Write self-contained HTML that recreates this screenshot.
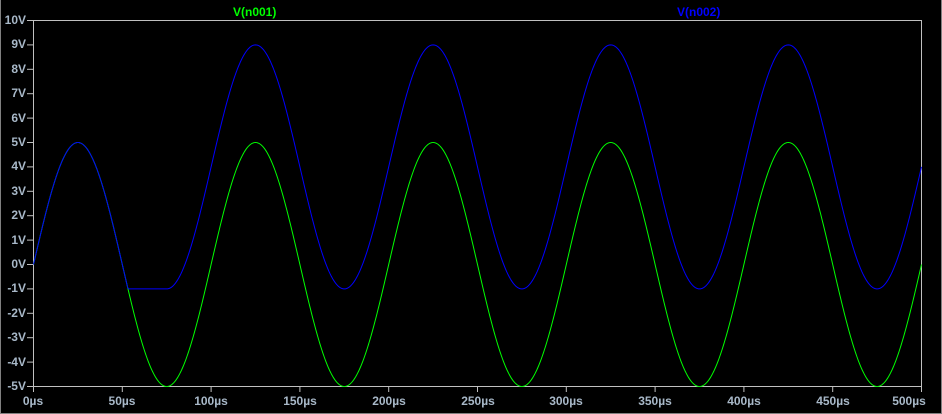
<!DOCTYPE html>
<html><head><style>
html,body{margin:0;padding:0;background:#000;width:942px;height:414px;overflow:hidden}
svg{display:block}
text{font-family:"Liberation Sans",sans-serif;font-weight:bold;font-size:12px}
</style></head><body>
<svg id="s" width="942" height="414" xmlns="http://www.w3.org/2000/svg">
<rect x="0" y="0" width="942" height="414" fill="#000"/>
<line x1="0.5" y1="0" x2="0.5" y2="414" stroke="#808080"/>
<line x1="941.5" y1="0" x2="941.5" y2="414" stroke="#808080"/>
<line x1="0" y1="413.5" x2="942" y2="413.5" stroke="#808080"/>
<rect x="33.5" y="20.5" width="888" height="366" fill="none" stroke="#c0c0c0"/>
<text x="233" y="16" fill="#00ff00">V(n001)</text>
<text x="677" y="16" fill="#0000ff">V(n002)</text>
<g fill="#a8b8c8" text-anchor="end">
<text x="26" y="24">10V</text><text x="26" y="48">9V</text><text x="26" y="73">8V</text><text x="26" y="97">7V</text><text x="26" y="122">6V</text><text x="26" y="146">5V</text><text x="26" y="170">4V</text><text x="26" y="195">3V</text><text x="26" y="219">2V</text><text x="26" y="244">1V</text><text x="26" y="268">0V</text><text x="26" y="292">-1V</text><text x="26" y="317">-2V</text><text x="26" y="341">-3V</text><text x="26" y="366">-4V</text><text x="26" y="390">-5V</text>
</g>
<g fill="#a8b8c8" text-anchor="middle">
<text x="33" y="405">0µs</text><text x="122" y="405">50µs</text><text x="211" y="405">100µs</text><text x="300" y="405">150µs</text><text x="389" y="405">200µs</text><text x="478" y="405">250µs</text><text x="566" y="405">300µs</text><text x="655" y="405">350µs</text><text x="744" y="405">400µs</text><text x="833" y="405">450µs</text><text x="909" y="405">500µs</text>
</g>
<g id="ticks" stroke="#c0c0c0"></g>
<polyline id="g" fill="none" stroke="#00ff00" stroke-width="1"/>
<polyline id="b" fill="none" stroke="#0000ff" stroke-width="1"/>
</svg>
<script>
var X=t=>33.5+t*888/500, Y=v=>20.5+(10-v)*366/15;
var tk=document.getElementById('ticks'),h='';
for(var v=-5;v<=10;v++){var y=Y(v);h+='<line x1="27" y1="'+y+'" x2="33" y2="'+y+'"/>';}
for(var t=0;t<=500;t+=50){var x=X(t);h+='<line x1="'+x+'" y1="387" x2="'+x+'" y2="392"/>';}
tk.innerHTML=h;
var g='',b='';
for(var t=0;t<=500;t+=0.5){
 var s=5*Math.sin(2*Math.PI*t/100),bv;
 if(t<75)bv=Math.max(s,-1);else bv=s+4;
 g+=X(t).toFixed(2)+','+Y(s).toFixed(2)+' ';
 b+=X(t).toFixed(2)+','+Y(bv).toFixed(2)+' ';
}
document.getElementById('g').setAttribute('points',g);
document.getElementById('b').setAttribute('points',b);
</script>
</body></html>
